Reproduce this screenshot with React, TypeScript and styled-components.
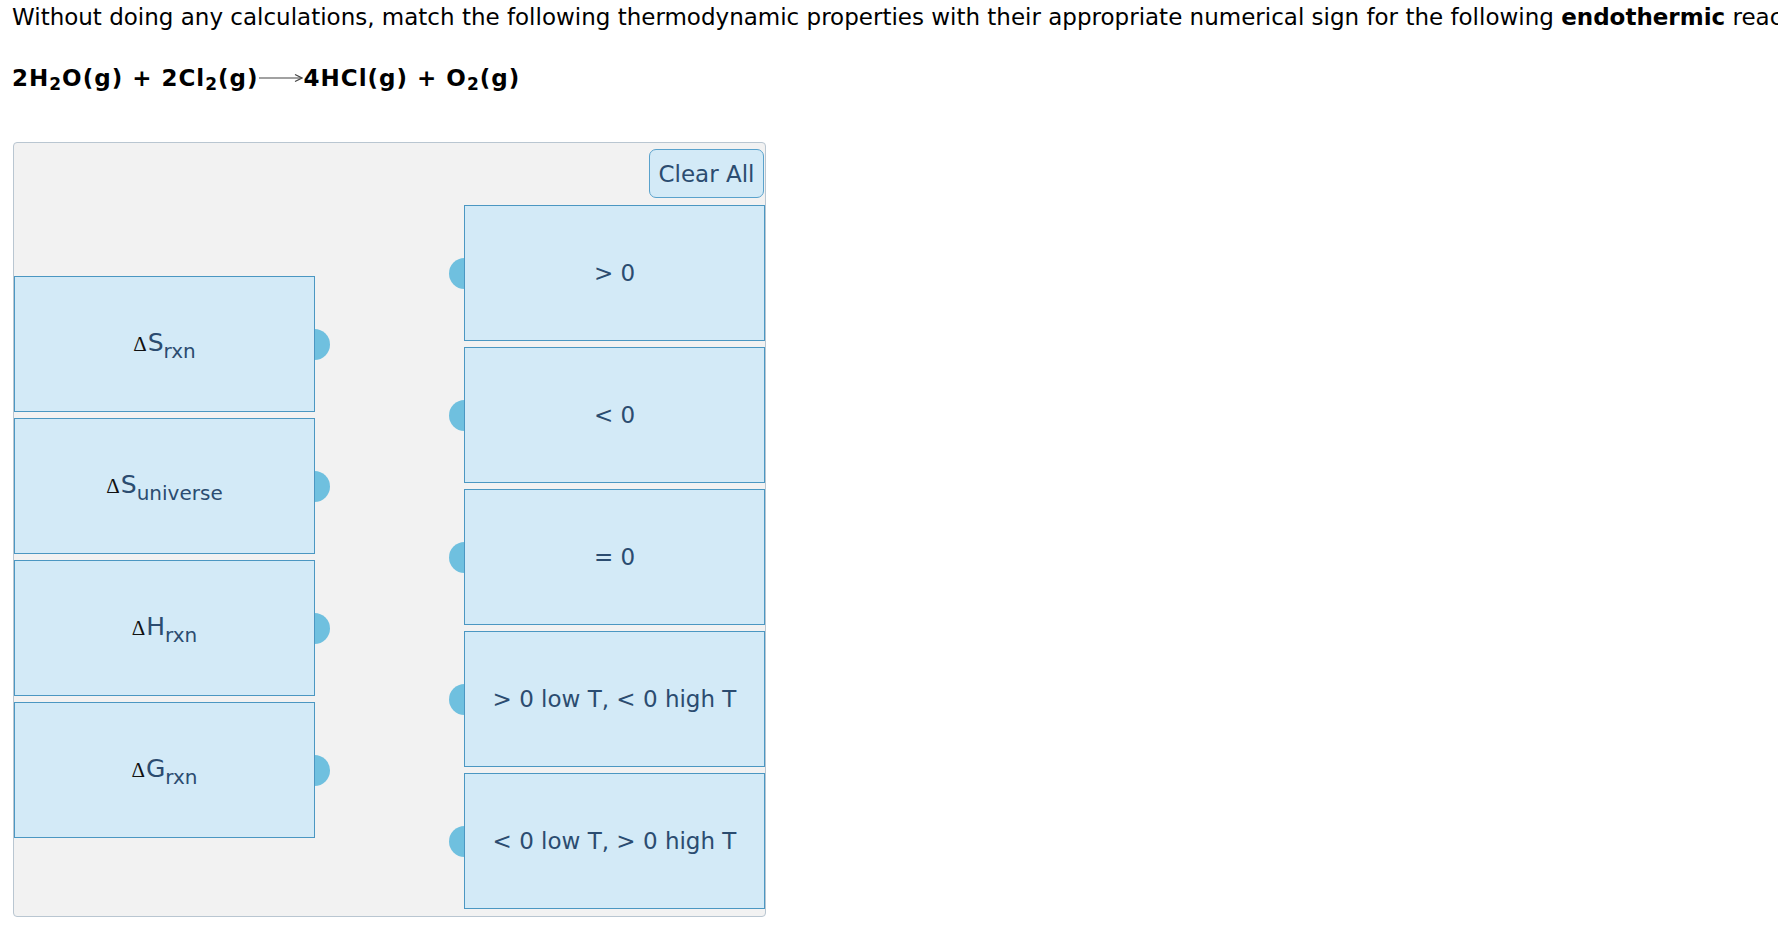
import React from "react"
import styled, { createGlobalStyle } from "styled-components"

const GlobalStyle = createGlobalStyle`
  html, body {
    margin: 0;
    padding: 0;
    overflow: hidden;
    background: #fff;
  }
  body {
    font-family: "DejaVu Sans", Verdana, sans-serif;
    color: #000;
  }
`

const Page = styled.div`
  padding: 0 0 0 12px;
`

const Prompt = styled.p`
  margin: 0;
  padding-top: 4px;
  font-size: 23px;
  line-height: 26px;
  white-space: nowrap;
`

const Equation = styled.p`
  margin: 35px 0 0;
  font-size: 23px;
  line-height: 26px;
  font-weight: bold;
  letter-spacing: 1px;
  white-space: nowrap;
`

const Sub = styled.sub`
  font-size: 17px;
  vertical-align: -4px;
  line-height: 0;
`

const ArrowIcon = styled.svg`
  display: inline-block;
  width: 44px;
  height: 10px;
  vertical-align: 3px;
  margin-right: 1px;
`

const Panel = styled.div`
  position: relative;
  z-index: 0;
  margin: 51px 0 0 1px;
  width: 751px;
  border: 1px solid #b9c6d1;
  border-radius: 4px;
  background: #f2f2f2;
  padding: 6px 0 7px;
  display: flex;
  flex-direction: column;
`

const Toolbar = styled.div`
  display: flex;
  justify-content: flex-end;
  padding-right: 1px;
`

const ClearButton = styled.button`
  width: 115px;
  height: 49px;
  padding: 0;
  font-family: "DejaVu Sans", Verdana, sans-serif;
  font-size: 23px;
  color: #2b4c70;
  background: #d3eaf7;
  border: 1px solid #5aa2cc;
  border-radius: 7px;
  cursor: pointer;
`

const Columns = styled.div`
  display: flex;
  align-items: center;
  justify-content: space-between;
  margin-top: 7px;
`

const Column = styled.div`
  display: flex;
  flex-direction: column;
  gap: 6px;
`

const Card = styled.div<{ $side: "left" | "right" }>`
  position: relative;
  box-sizing: border-box;
  width: 301px;
  height: 136px;
  display: flex;
  align-items: center;
  justify-content: center;
  background: #d3eaf7;
  border: 1px solid #4b97c2;
  color: #2b4c70;
  font-size: 23px;

  &::before {
    content: "";
    position: absolute;
    z-index: -1;
    top: 50%;
    ${p => (p.$side === "left" ? "right: -16px;" : "left: -16px;")}
    width: 31px;
    height: 31px;
    margin-top: -15px;
    border-radius: 50%;
    background: #6fc0df;
  }
`

const Label = styled.span`
  font-size: 25px;
  line-height: 1;
  margin-top: -4px;
`

const Delta = styled.span`
  font-family: "Liberation Serif", "Times New Roman", serif;
  font-size: 21px;
  color: #111;
  margin-right: 1px;
`

const LabelSub = styled.sub`
  font-size: 20px;
  vertical-align: -7px;
  line-height: 0;
`

const properties = [
  { symbol: "S", sub: "rxn" },
  { symbol: "S", sub: "universe" },
  { symbol: "H", sub: "rxn" },
  { symbol: "G", sub: "rxn" },
]

const signs = [
  "> 0",
  "< 0",
  "= 0",
  "> 0 low T, < 0 high T",
  "< 0 low T, > 0 high T",
]

// long reaction arrow between reactants and products
const ReactionArrow = () => (
  <ArrowIcon viewBox="0 0 44 10">
    <line x1="0" y1="5" x2="42" y2="5" stroke="#444" strokeWidth="1.2" />
    <path d="M36 1.5 L43 5 L36 8.5" fill="none" stroke="#444" strokeWidth="1.2" />
  </ArrowIcon>
)

const App = () => (
  <Page>
    <GlobalStyle />
    <Prompt>
      Without doing any calculations, match the following thermodynamic
      properties with their appropriate numerical sign for the following{" "}
      <b>endothermic</b> reaction.
    </Prompt>
    <Equation>
      2H<Sub>2</Sub>O(g) + 2Cl<Sub>2</Sub>(g)
      <ReactionArrow />
      4HCl(g) + O<Sub>2</Sub>(g)
    </Equation>
    <Panel>
      <Toolbar>
        <ClearButton>Clear All</ClearButton>
      </Toolbar>
      <Columns>
        <Column>
          {properties.map((prop, i) => (
            <Card key={i} $side="left">
              <Label>
                <Delta>Δ</Delta>
                {prop.symbol}
                <LabelSub>{prop.sub}</LabelSub>
              </Label>
            </Card>
          ))}
        </Column>
        <Column>
          {signs.map((sign, i) => (
            <Card key={i} $side="right">
              {sign}
            </Card>
          ))}
        </Column>
      </Columns>
    </Panel>
  </Page>
)

export default App
